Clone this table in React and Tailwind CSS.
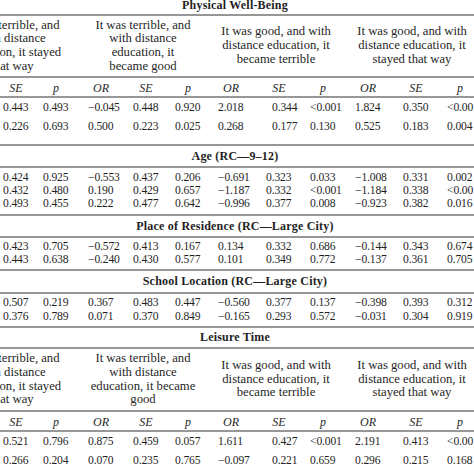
import React from "react";

// column templates: A for the two sections with group headers, B for the middle ones
const COLS_A = "grid grid-cols-[40px_45px_45px_42px_43px_54px_38px_45px_48px_44px_60px]";
const COLS_B = "grid grid-cols-[40px_45px_45px_42px_43px_48px_44px_45px_48px_44px_60px]";

const LABELS = ["SE", "p", "OR", "SE", "p", "OR", "SE", "p", "OR", "SE", "p"];

const physical = [
    ["0.443", "0.493", "\u22120.045", "0.448", "0.920", "2.018", "0.344", "<0.001", "1.824", "0.350", "<0.001"],
    ["0.226", "0.693", "0.500", "0.223", "0.025", "0.268", "0.177", "0.130", "0.525", "0.183", "0.004"],
];
const age = [
    ["0.424", "0.925", "\u22120.553", "0.437", "0.206", "\u22120.691", "0.323", "0.033", "\u22121.008", "0.331", "0.002"],
    ["0.432", "0.480", "0.190", "0.429", "0.657", "\u22121.187", "0.332", "<0.001", "\u22121.184", "0.338", "<0.001"],
    ["0.493", "0.455", "0.222", "0.477", "0.642", "\u22120.996", "0.377", "0.008", "\u22120.923", "0.382", "0.016"],
];
const residence = [
    ["0.423", "0.705", "\u22120.572", "0.413", "0.167", "0.134", "0.332", "0.686", "\u22120.144", "0.343", "0.674"],
    ["0.443", "0.638", "\u22120.240", "0.430", "0.577", "0.101", "0.349", "0.772", "\u22120.137", "0.361", "0.705"],
];
const school = [
    ["0.507", "0.219", "0.367", "0.483", "0.447", "\u22120.560", "0.377", "0.137", "\u22120.398", "0.393", "0.312"],
    ["0.376", "0.789", "0.071", "0.370", "0.849", "\u22120.165", "0.293", "0.572", "\u22120.031", "0.304", "0.919"],
];
const leisure = [
    ["0.521", "0.796", "0.875", "0.459", "0.057", "1.611", "0.427", "<0.001", "2.191", "0.413", "<0.001"],
    ["0.266", "0.204", "0.070", "0.235", "0.765", "\u22120.097", "0.221", "0.659", "0.296", "0.215", "0.168"],
];

function Line() {
    return <div className="h-[2px] bg-[#979797]" />;
}

function Title({text, className}) {
    return (
        <div className={"w-[470px] text-center font-bold text-[12px] tracking-[0.2px] whitespace-nowrap " + className}>
            {text}
        </div>
    );
}

function DataRow({cells, cols, h}) {
    return (
        <div className={cols + " pl-[3px] " + h}>
            {cells.map((c, i) => (
                <div key={i} className="whitespace-nowrap text-[11.6px] tracking-[-0.15px]">{c}</div>
            ))}
        </div>
    );
}

function LabelRow() {
    return (
        <div className={COLS_B + " pl-[3px] h-[18px] leading-[18px]"}>
            {LABELS.map((l, i) => (
                <div key={i} className="whitespace-nowrap">
                    <span className="inline-block w-[26px] text-center italic text-[12px]">{l}</span>
                </div>
            ))}
        </div>
    );
}

function GroupHeader({second, h}) {
    const groups = [
        ["It was terrible, and", "with distance", "education, it stayed", "that way"],
        second,
        ["It was good, and with", "distance education, it", "became terrible"],
        ["It was good, and with", "distance education, it", "stayed that way"],
    ];
    const widths = ["w-[148px]", "w-[114px]", "w-[152px]", "w-[120px]"];
    return (
        <div className={"flex ml-[-62px] " + h}>
            {groups.map((g, i) => (
                <div key={i} className={widths[i] + " shrink-0 flex flex-col justify-center items-center text-[12.7px] leading-[13.7px]"}>
                    {g.map((line, j) => (
                        <div key={j} className="whitespace-nowrap">{line}</div>
                    ))}
                </div>
            ))}
        </div>
    );
}

export default function App() {
    return (
        <div className="w-[474px] h-[474px] overflow-hidden bg-white text-[#1f1f1f] font-['Liberation_Serif',serif]">
            {/* Physical Well-Being */}
            <Title text="Physical Well-Being" className="h-[14px] leading-[11px]" />
            <Line />
            <GroupHeader h="h-[60px]" second={["It was terrible, and", "with distance", "education, it", "became good"]} />
            <Line />
            <LabelRow />
            <Line />
            <div className="pb-[7px]">
                <DataRow cells={physical[0]} cols={COLS_A} h="h-[19px] leading-[19px]" />
                <DataRow cells={physical[1]} cols={COLS_A} h="h-[20px] leading-[20px]" />
            </div>
            <Line />

            {/* Age */}
            <Title text="Age (RC—9–12)" className="h-[20px] leading-[20px]" />
            <Line />
            <div className="pt-[3px] pb-[4px]">
                {age.map((r, i) => (
                    <DataRow key={i} cells={r} cols={COLS_B} h="h-[13px] leading-[13px]" />
                ))}
            </div>
            <Line />

            {/* Place of Residence */}
            <Title text="Place of Residence (RC—Large City)" className="h-[20px] leading-[20px]" />
            <Line />
            <div className="pt-[2px] pb-[3px]">
                {residence.map((r, i) => (
                    <DataRow key={i} cells={r} cols={COLS_B} h="h-[13px] leading-[13px]" />
                ))}
            </div>
            <Line />

            {/* School Location */}
            <Title text="School Location (RC—Large City)" className="h-[21px] leading-[21px]" />
            <Line />
            <div className="pt-[2px] pb-[2px]">
                {school.map((r, i) => (
                    <DataRow key={i} cells={r} cols={COLS_B} h="h-[14px] leading-[14px]" />
                ))}
            </div>
            <Line />

            {/* Leisure Time */}
            <Title text="Leisure Time" className="h-[19px] leading-[19px]" />
            <Line />
            <GroupHeader h="h-[61px]" second={["It was terrible, and", "with distance", "education, it became", "good"]} />
            <Line />
            <LabelRow />
            <Line />
            <div className="pb-[7px]">
                <DataRow cells={leisure[0]} cols={COLS_A} h="h-[19px] leading-[19px]" />
                <DataRow cells={leisure[1]} cols={COLS_A} h="h-[20px] leading-[20px]" />
            </div>
            <Line />
        </div>
    );
}
